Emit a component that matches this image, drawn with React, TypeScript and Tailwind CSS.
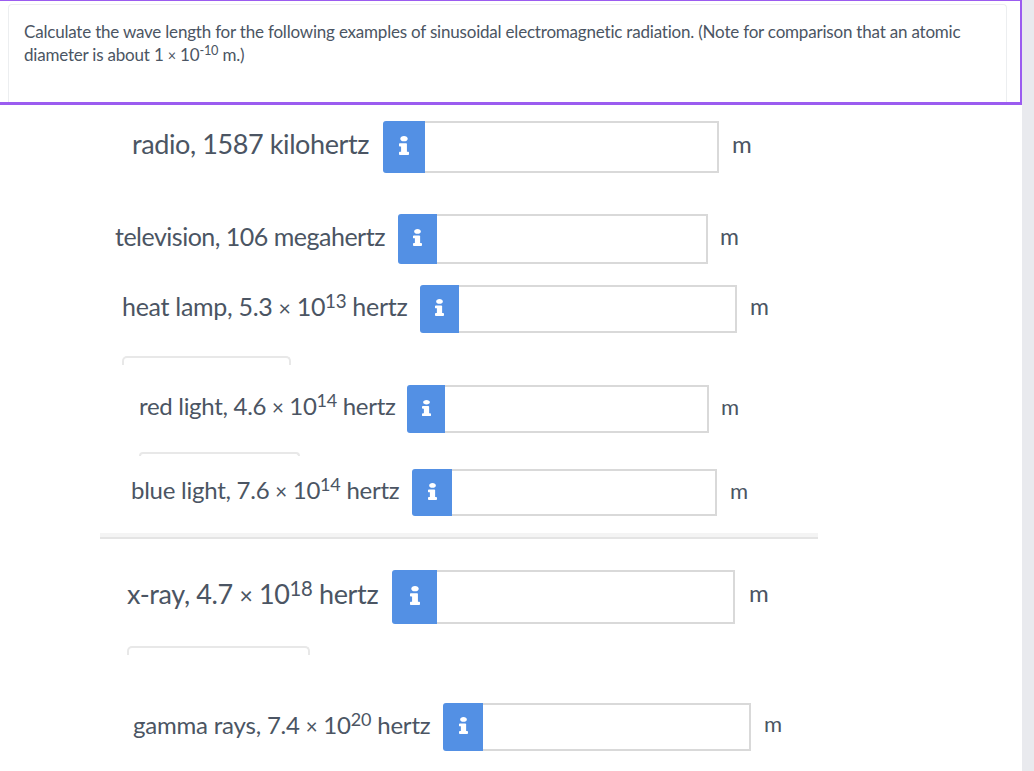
import React from 'react';
import { FaInfo } from 'react-icons/fa';

type RowProps = {
  children: React.ReactNode;
  rowClass: string;
  textClass: string;
  buttonClass: string;
  iconClass: string;
  inputClass: string;
  unitClass: string;
};

const Row: React.FC<RowProps> = ({ children, rowClass, textClass, buttonClass, iconClass, inputClass, unitClass }) => (
  <div className={`flex items-stretch ${rowClass}`}>
    <div className={`flex items-center whitespace-pre text-[#4b5563] [&_sup]:top-[-0.42em] ${textClass}`}>
      <span>{children}</span>
    </div>
    <div className={`flex items-center justify-center rounded-l-[3px] bg-[#5390e4] pb-[3px] text-white ${buttonClass}`}>
      <FaInfo preserveAspectRatio="none" className={iconClass} />
    </div>
    <div className={`border-2 border-l-0 border-[#d9d9d9] bg-white ${inputClass}`} />
    <div className={`flex items-center text-[#4b5563] ${unitClass}`}>m</div>
  </div>
);

const Tab: React.FC<{ className: string }> = ({ className }) => (
  <div className={`rounded-t-[5px] border-2 border-b-0 border-[#e8e8e8] ${className}`} />
);

const Times = () => <span className="text-[0.85em]">×</span>;

export default function App() {
  return (
    <div className="flex h-[771px] overflow-hidden bg-white font-['Lato','Liberation_Sans',sans-serif]">
      <main className="w-[1022px]">
        <header className="h-[105px] border-t-[1px] border-r-[2px] border-b-[3px] border-[#9b5cf0] pl-[8px] pr-[13px] pt-[3px]">
          <div className="h-[98px] rounded-t-[4px] border border-b-0 border-[#eceef0] pl-[15px] pt-[15px] text-[17px] leading-[23px] tracking-[-0.2px] text-[#4b5563]">
            <p>Calculate the wave length for the following examples of sinusoidal electromagnetic radiation. (Note for comparison that an atomic</p>
            <p>diameter is about 1 <Times /> 10<sup>-10</sup> m.)</p>
          </div>
        </header>

        <Row rowClass="mt-[16px] ml-[132px] h-[52px]" textClass="w-[251px] pb-[5px] text-[27px] tracking-[-0.4px]" buttonClass="w-[42px]" iconClass="w-[10px] h-[19px]" inputClass="w-[294px]" unitClass="ml-[13px] pb-[6px] text-[24px]">
          radio, 1587 kilohertz
        </Row>
        <Row rowClass="mt-[41px] ml-[115px] h-[50px]" textClass="w-[283px] pb-[5px] text-[25px] tracking-[-0.5px]" buttonClass="w-[39px]" iconClass="w-[9px] h-[17px]" inputClass="w-[271px]" unitClass="ml-[12px] pb-[5px] text-[23px]">
          television, 106 megahertz
        </Row>
        <Row rowClass="mt-[21px] ml-[122px] h-[48px]" textClass="w-[298px] pb-[5px] text-[25px] tracking-[-0.3px]" buttonClass="w-[39px]" iconClass="w-[9px] h-[17px]" inputClass="w-[278px]" unitClass="ml-[13px] pb-[5px] text-[23px]">
          heat lamp, 5.3 <Times /> 10<sup>13</sup> hertz
        </Row>
        <Tab className="mt-[23px] ml-[122px] h-[9px] w-[169px]" />
        <Row rowClass="mt-[20px] ml-[139px] h-[48px]" textClass="w-[268px] pb-[7px] text-[24px] tracking-[-0.3px]" buttonClass="w-[38px]" iconClass="w-[9px] h-[16px]" inputClass="w-[264px]" unitClass="ml-[12px] pb-[6px] text-[22px]">
          red light, 4.6 <Times /> 10<sup>14</sup> hertz
        </Row>
        <Tab className="mt-[19px] ml-[139px] h-[4px] w-[161px]" />
        <Row rowClass="mt-[13px] ml-[131px] h-[47px]" textClass="w-[281px] pb-[5px] text-[24px] tracking-[-0.25px]" buttonClass="w-[40px]" iconClass="w-[9px] h-[17px]" inputClass="w-[265px]" unitClass="ml-[13px] pb-[5px] text-[22px]">
          blue light, 7.6 <Times /> 10<sup>14</sup> hertz
        </Row>
        <div className="mt-[17px] ml-[100px] h-[6px] w-[718px] border-b-2 border-[#e4e4e4] bg-[#f4f4f4]" />
        <Row rowClass="mt-[31px] ml-[127px] h-[54px]" textClass="w-[265px] pb-[5px] text-[27px] tracking-[-0.35px]" buttonClass="w-[45px]" iconClass="w-[10px] h-[19px]" inputClass="w-[298px]" unitClass="ml-[14px] pb-[8px] text-[24px]">
          x-ray, 4.7 <Times /> 10<sup>18</sup> hertz
        </Row>
        <Tab className="mt-[22px] ml-[127px] h-[9px] w-[183px]" />
        <Row rowClass="mt-[48px] ml-[133px] h-[48px]" textClass="w-[310px] pb-[5px] text-[24px] tracking-[-0.2px]" buttonClass="w-[40px]" iconClass="w-[9px] h-[17px]" inputClass="w-[268px]" unitClass="ml-[13px] pb-[7px] text-[22px]">
          gamma rays, 7.4 <Times /> 10<sup>20</sup> hertz
        </Row>
      </main>
      <div className="w-[12px] bg-[#e9eaee]" />
    </div>
  );
}
